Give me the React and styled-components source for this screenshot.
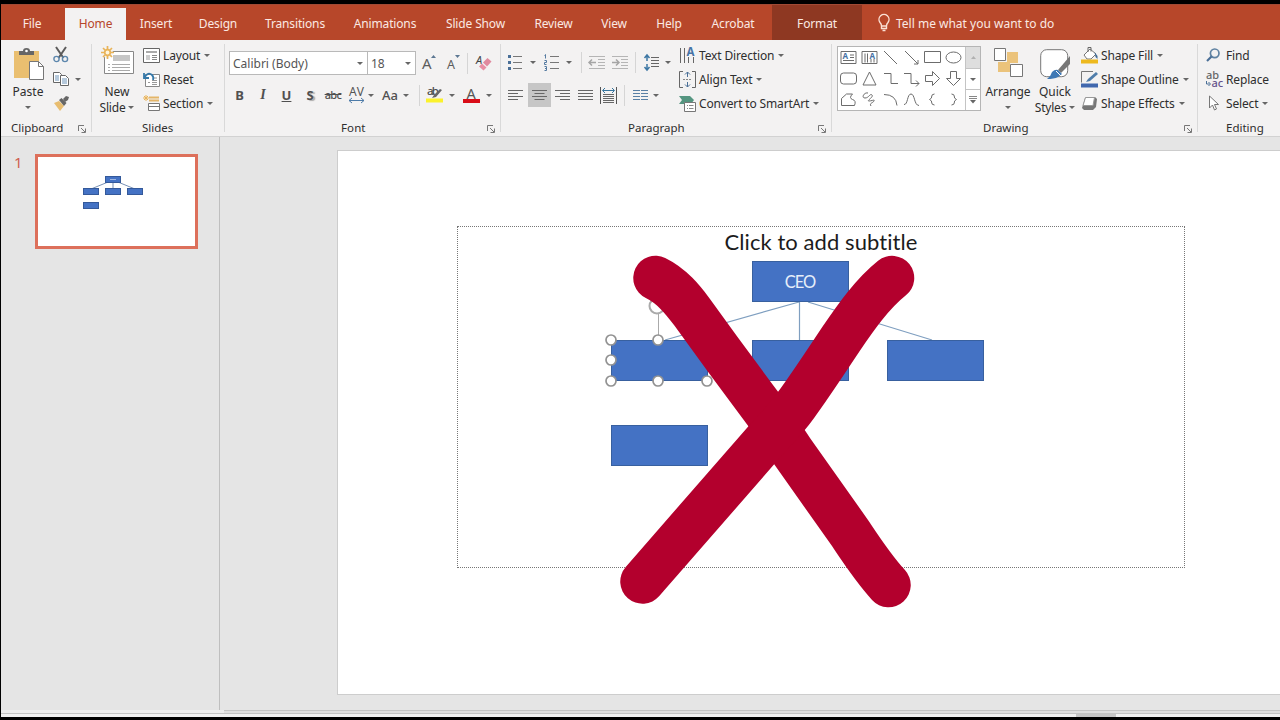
import React from 'react';
import styled, { createGlobalStyle } from 'styled-components';

const Global = createGlobalStyle`
  *, *::before, *::after { box-sizing: border-box; }
  body { margin: 0; background: #000; overflow: hidden; }
  svg { display: block; flex: none; overflow: visible; }
`;

const Window = styled.div`
  width: 1280px;
  height: 720px;
  padding: 4px 0 3px 1px;
  background: #000;
  display: flex;
  flex-direction: column;
  font: 12px 'Noto Sans', 'Open Sans', sans-serif;
  color: #2e2e2e;
  overflow: hidden;
`;

/* ---------- Tab strip ---------- */
const TabStrip = styled.nav`
  height: 36px;
  flex: none;
  display: flex;
  align-items: flex-end;
  background: #b7472a;
  border-top: 1px solid #a04a35;
`;
const Tab = styled.div`
  width: ${(p) => p.$w}px;
  height: ${(p) => (p.$context ? 35 : 32)}px;
  padding: ${(p) => (p.$context ? 3 : 0)}px 0 2px;
  margin-left: ${(p) => p.$ml || 0}px;
  display: flex;
  align-items: center;
  justify-content: center;
  white-space: nowrap;
  letter-spacing: -0.15px;
  color: ${(p) => (p.$active ? '#b7472a' : '#fbe9e3')};
  background: ${(p) => (p.$active ? '#f3f2f2' : p.$context ? '#8e3822' : 'transparent')};
`;
const TellMe = styled.div`
  height: 32px;
  padding-bottom: 2px;
  margin-left: 16px;
  display: flex;
  align-items: center;
  gap: 6px;
  color: #fbe9e3;
  letter-spacing: 0;
  white-space: nowrap;
`;

/* ---------- Ribbon ---------- */
const Ribbon = styled.div`
  height: 97px;
  flex: none;
  display: flex;
  background: #f3f2f2;
  border-bottom: 1px solid #d2d2d2;
`;
const Group = styled.section`
  width: ${(p) => p.$w}px;
  flex: none;
  display: flex;
  flex-direction: column;
  padding-top: 3px;
  background: linear-gradient(#d9d9d9, #d9d9d9) right 4px / 1px 88px no-repeat;
`;
const GroupBody = styled.div`
  height: 77px;
  display: flex;
`;
const Caption = styled.div`
  height: 16px;
  position: relative;
  padding-left: ${(p) => p.$pl}px;
  line-height: 16px;
  font-size: 11.5px;
  white-space: nowrap;
  letter-spacing: ${(p) => p.$ls || 0}px;
`;
const Launcher = styled.span`
  position: absolute;
  right: 6px;
  top: 5px;
`;
const Column = styled.div`
  width: ${(p) => p.$w}px;
  margin-left: ${(p) => p.$ml || 0}px;
  flex: none;
  display: flex;
  flex-direction: column;
`;
const Command = styled.div`
  height: 24px;
  display: flex;
  align-items: center;
  white-space: nowrap;
  letter-spacing: -0.15px;
`;
const IconCell = styled.span`
  width: ${(p) => p.$w || 20}px;
  flex: none;
`;
const BigButton = styled.div`
  width: ${(p) => p.$w}px;
  margin-left: ${(p) => p.$ml || 0}px;
  flex: none;
  display: flex;
  flex-direction: column;
  align-items: center;
`;
const BigIcon = styled.span`
  height: 40px;
  padding-top: ${(p) => p.$pt || 3}px;
`;
const BigLabel = styled.span`
  height: 16px;
  display: flex;
  align-items: center;
  white-space: nowrap;
  letter-spacing: ${(p) => p.$ls || 0}px;
`;
const Arrow = styled.i`
  flex: none;
  margin-left: ${(p) => p.$ml ?? 3}px;
  border: 3px solid transparent;
  border-top-color: #666;
  border-bottom: 0;
`;
const ToolRow = styled.div`
  height: 24px;
  margin-top: ${(p) => p.$mt || 0}px;
  padding-left: ${(p) => p.$pl || 0}px;
  display: flex;
  align-items: center;
`;
const Slot = styled.span`
  width: ${(p) => p.$w}px;
  height: 24px;
  margin-left: ${(p) => p.$ml || 0}px;
  flex: none;
  display: flex;
  align-items: center;
  justify-content: center;
  background: ${(p) => (p.$on ? '#c6c6c6' : 'transparent')};
`;
const Divider = styled.i`
  width: 1px;
  height: 21px;
  flex: none;
  margin: 0 ${(p) => p.$r || 0}px 0 ${(p) => p.$l || 0}px;
  background: #d5d5d5;
`;
const Combo = styled.div`
  width: ${(p) => p.$w}px;
  height: 24px;
  margin-left: ${(p) => p.$ml || 0}px;
  padding: 0 4px 0 3px;
  display: flex;
  align-items: center;
  justify-content: space-between;
  border: 1px solid #b9b9b9;
  background: #fff;
  color: #555;
`;
const Glyph = styled.span`
  font-size: ${(p) => p.$size || 13}px;
  line-height: 16px;
  color: #505050;
  font-weight: ${(p) => (p.$bold ? 700 : 500)};
  font-style: ${(p) => (p.$italic ? 'italic' : 'normal')};
  font-family: ${(p) => (p.$serif ? "'Liberation Serif', serif" : 'inherit')};
  text-decoration: ${(p) => p.$line || 'none'};
  text-shadow: ${(p) => (p.$shadow ? '2px 1px 1px #aaa' : 'none')};
  letter-spacing: ${(p) => p.$ls || 0}px;
`;

/* ---------- Shape gallery ---------- */
const Gallery = styled.div`
  width: 144px;
  height: 65px;
  margin: 3px 0 0 5px;
  flex: none;
  display: flex;
  border: 1px solid #b5b5b5;
  background: #fff;
`;
const ShapeGrid = styled.div`
  width: 127px;
  display: grid;
  grid-template-columns: repeat(6, 21px);
  grid-template-rows: repeat(3, 21px);
  place-items: center;
`;
const GalleryScroll = styled.div`
  flex: 1;
  display: grid;
  grid-template-rows: 21px 21px 21px;
  border-left: 1px solid #c4c4c4;
`;
const ScrollKey = styled.span`
  display: grid;
  place-items: center;
  background: ${(p) => (p.$off ? '#dedede' : '#fff')};
  & + & { border-top: 1px solid #c4c4c4; }
`;

/* ---------- Workspace ---------- */
const Workspace = styled.main`
  flex: 1;
  min-height: 0;
  display: flex;
  background: #e5e5e5;
`;
const ThumbPane = styled.aside`
  width: 219px;
  flex: none;
  padding: 17px 0 0 13px;
  display: flex;
  align-items: flex-start;
  border-right: 1px solid #bfbfbf;
`;
const ThumbNumber = styled.span`
  width: 21px;
  font-size: 15px;
  line-height: 16px;
  color: #cf5f4e;
`;
const Thumb = styled.div`
  width: 163px;
  height: 95px;
  border: 3px solid #dd705b;
  background: #fff;
`;
const Stage = styled.div`
  flex: 1;
  padding: 13px 0 0 117px;
  overflow: hidden;
`;
const Slide = styled.div`
  position: relative;
  width: 960px;
  height: 545px;
  border: 1px solid #cdcdcd;
  background: #fff;
`;
const Subtitle = styled.div`
  position: absolute;
  left: 119px;
  top: 75px;
  width: 728px;
  height: 342px;
  border: 1px dotted #777;
  text-align: center;
  font: 22px/30px Lato, sans-serif;
  letter-spacing: 0.07px;
  color: #1c1c1c;
`;
const Node = styled.div`
  position: absolute;
  left: ${(p) => p.$x}px;
  top: ${(p) => p.$y}px;
  width: 97px;
  height: 41px;
  border: 1px solid #38609f;
  background: #4472c4;
  color: #e6eefa;
  font: 16.5px/40px Lato, sans-serif;
  letter-spacing: -1px;
  text-align: center;
`;
const Overlay = styled.svg`
  position: absolute;
  left: 0;
  top: 0;
`;
const StatusBar = styled.footer`
  height: 7px;
  flex: none;
  background: #ededed;
`;
const SplitLine = styled.div`
  height: 3px;
  margin-left: 223px;
  border-top: 1px solid #c4c4c4;
  background: #dfdfdf;
`;
const StatusEdge = styled.div`
  height: 4px;
  padding-left: 1075px;
  border-top: 1px solid #c4c4c4;
  background: #f1f1f1;
`;
const StatusThumb = styled.div`
  width: 40px;
  height: 3px;
  background: #c6c6c6;
`;

const Ico = ({ w = 16, h = w, children, ...rest }) => (
  <svg width={w} height={h} viewBox={`0 0 ${w} ${h}`} fill="none" stroke="#666" {...rest}>{children}</svg>
);

const LaunchMark = () => (
  <Launcher><Ico w={8} stroke="#777"><path d="M.5 6V.5H6M3 3l4 4M7.500 3.500v4h-4" /></Ico></Launcher>
);

/* Clipboard and slide icons */
const PasteIcon = () => (
  <Ico w={31} h={33}>
    <path d="M1 3h25v27H1z" fill="#eabf70" stroke="none" />
    <path d="M6 7V3h4q0-3 3.500-3T17 3h4v4z" fill="#666" stroke="none" />
    <circle cx="13.500" cy="3" r="1.300" fill="#fff" stroke="none" />
    <path d="M16.500 13.500h9l5 5v13h-14z" fill="#fff" stroke="#777" />
    <path d="M25.500 13.500v5h5" stroke="#777" />
  </Ico>
);
const CutIcon = () => (
  <Ico w={16}>
    <path d="M3 0l7.500 11M13 0L5.500 11" stroke="#5c5c5c" strokeWidth="2" />
    <circle cx="3.500" cy="12" r="2.600" stroke="#5d87ad" strokeWidth="1.400" />
    <circle cx="12" cy="12" r="2.600" stroke="#5d87ad" strokeWidth="1.400" />
  </Ico>
);
const CopyIcon = () => (
  <Ico w={17} h={16}>
    <path d="M.5 1.500h6l2 2v8h-8z" fill="#fff" />
    <path d="M2 5h4M2 7h4M2 9h4" stroke="#6d93b8" />
    <path d="M7.500 4.500h5l3 3v7H7.500z" fill="#fff" />
    <path d="M9 8h5M9 10h5M9 12h5" stroke="#6d93b8" />
  </Ico>
);
const BrushIcon = () => (
  <Ico w={17} h={15} stroke="none">
    <path d="M1 7l5-2 5 5-4 5z" fill="#e8bd70" />
    <path d="M6 4l2.500-2 5 5L11 10z" fill="#666" />
    <path d="M10 3l3-3 3 1-1 3-3 2z" fill="#666" />
  </Ico>
);
const NewSlideIcon = () => (
  <Ico w={33} h={30}>
    <path d="M3.500 5.500h29v22h-29z" fill="#fff" stroke="#888" />
    <path d="M12 9h17v6H12z" fill="#c6c6c6" stroke="none" />
    <path d="M7 18.500h2M11 18.500h18M7 21.500h2M11 21.500h18M7 24.500h2M11 24.500h18" stroke="#aaa" />
    <circle cx="6.500" cy="6.500" r="5.500" fill="#f3f2f2" stroke="none" />
    <circle cx="6.500" cy="6.500" r="2.800" fill="#fff5dc" stroke="#e9b45a" strokeWidth="1.700" />
    <path d="M6.500 0v3M6.500 10v3M0 6.500h3M10 6.500h3M2 2l2 2M9 9l2 2M11 2L9 4M4 9l-2 2" stroke="#e9b45a" strokeWidth="1.700" />
  </Ico>
);
const LayoutIcon = () => (
  <Ico w={17} h={15}><path d="M.5.5h16v14H.5z" fill="#fff" /><path d="M3 4h11" stroke="#aaa" strokeWidth="2" /><path d="M3 7h4v5H3z" fill="#ccc" stroke="none" /><path d="M9 7.500h5M9 9.500h5M9 11.500h5" stroke="#888" /></Ico>
);
const ResetIcon = () => (
  <Ico w={17} h={15}><path d="M2.500 2.500h14v12h-14z" fill="#fff" stroke="#888" /><path d="M10 6h4M5 10.500h2M9 8.500h5M9 10.500h5M9 12.500h5" stroke="#999" /><path d="M1 1v5h5M1.500 5.500Q5-.5 9 3q2 2 1 5" stroke="#3578a8" strokeWidth="1.800" /></Ico>
);
const SectionIcon = () => (
  <Ico w={17} h={16}><path d="M6 2.500h10M6 5.500h10" stroke="#e4b568" strokeWidth="2" /><path d="M5.500 8.500h11v7h-11zM5.500 11.500h11" fill="#fff" stroke="#777" /><path d="M3 0v6M0 3h6M1 1l4 4M5 1L1 5" stroke="#e9b45a" /></Ico>
);

/* Font icons */
const GrowIcon = () => (
  <Ico w={15} h={18}><text x="0" y="15" fontSize="15" fill="#5c5c5c" stroke="none">A</text><path d="M9 4l2.500-3L14 4z" fill="#5c7792" stroke="none" /></Ico>
);
const ShrinkIcon = () => (
  <Ico w={15} h={18}><text x="1" y="15" fontSize="12.500" fill="#5c5c5c" stroke="none">A</text><path d="M9 1l2.500 3L14 1z" fill="#5c7792" stroke="none" /></Ico>
);
const EraserIcon = () => (
  <Ico w={16} h={18}><text x="0" y="10" fontSize="11" fontStyle="italic" fill="#444" stroke="none">A</text><path d="M3 12.500l3-3 4.500 4-3 3z" fill="#e88fa4" stroke="none" /><path d="M7 8.500l4.500-4.500 4 3.500-4.500 5z" fill="#e08a9f" stroke="none" /></Ico>
);
const SpacingIcon = () => (
  <Ico w={17} h={17}><text x="1" y="9" fontSize="12" textLength="15" fill="#555" stroke="none">AV</text><path d="M1 13.500h15M4 11l-3 2.500L4 16M13 11l3 2.500-3 2.500" stroke="#4d7ba8" /></Ico>
);
const HighlightIcon = () => (
  <Ico w={18} h={18}><text x="1" y="9" fontSize="11.500" textLength="12" fontWeight="500" fill="#4c4c4c" stroke="none">ab</text><path d="M6 12l2-3 6-6 2 1-6 7z" fill="#666" stroke="none" /><path d="M0 12.500h17v4H0z" fill="#fbf22c" stroke="none" /></Ico>
);
const FontColorIcon = () => (
  <Ico w={17} h={18}><text x="3.500" y="12.500" fontSize="14.500" fill="#555" stroke="none">A</text><path d="M0 13h17v4H0z" fill="#d90d18" stroke="none" /></Ico>
);

/* Paragraph icons */
const BulletsIcon = () => (
  <Ico w={15} h={17}><path d="M5 2.500h9M5 8.500h9M5 14.500h9" stroke="#777" /><path d="M0 1h3v3H0zM0 7h3v3H0zM0 13h3v3H0z" fill="#4a6f97" stroke="none" /></Ico>
);
const NumbersIcon = () => (
  <Ico w={16} h={17}><path d="M6 2.500h9M6 8.500h9M6 14.500h9" stroke="#777" /><path d="M.5 1.500l1-1v4M.5 6.500h2v2h-2v2h2M.5 12.500h2v4h-2M1 14.500h1" stroke="#557ba1" /></Ico>
);
const IndentIcon = ({ flip }) => (
  <Ico w={18} h={15} stroke="#b5b5b5"><path d="M1 1.500h16M10 4.500h7M10 7.500h7M10 10.500h7M1 13.500h16" /><path d={flip ? 'M1 7.500h7M5 4.500l3 3-3 3' : 'M8 7.500H1M4 4.500l-3 3 3 3'} stroke="#a5a5a5" strokeWidth="1.500" /></Ico>
);
const LineSpaceIcon = () => (
  <Ico w={16} h={17}><path d="M7 3.500h8M7 6.500h8M7 9.500h8M7 12.500h8" stroke="#666" /><path d="M3 1v6M.5 4L3 1l2.500 3M3 10v6M.5 13L3 16l2.500-3" stroke="#3d77a4" strokeWidth="1.500" /></Ico>
);
const alignPaths = {
  left: 'M0 1.500h15M0 4.500h10M0 7.500h15M0 10.500h10',
  center: 'M0 1.500h15M2.500 4.500h10M0 7.500h15M2.500 10.500h10',
  right: 'M0 1.500h15M5 4.500h10M0 7.500h15M5 10.500h10',
  full: 'M0 1.500h15M0 4.500h15M0 7.500h15M0 10.500h15',
};
const AlignIcon = ({ kind }) => <Ico w={15} h={12}><path d={alignPaths[kind]} /></Ico>;
const DistributeIcon = () => (
  <Ico w={17} h={17}><path d="M.5 0v17M16.500 0v17" stroke="#555" /><path d="M3 7.500h11M3 9.500h11M3 11.500h11M3 13.500h11M3 15.500h11" /><path d="M3 3.500h11M5 1L2.500 3.500 5 6M12 1l2.500 2.500L12 6" stroke="#36759e" /></Ico>
);
const ColumnsIcon = () => <Ico w={15} h={12} stroke="#5980a5"><path d="M0 1.500h7M8 1.500h7M0 4.500h7M8 4.500h7M0 7.500h7M8 7.500h7M0 10.500h7M8 10.500h7" /></Ico>;
const DirectionIcon = () => (
  <Ico w={16} h={17}><path d="M1.500 1v15M5.500 1v15M9.500 10v6M14.500 10v6" stroke="#666" /><text x="7.500" y="9" fontSize="11.500" fontWeight="700" fill="#4672a5" stroke="none">A</text></Ico>
);
const AlignTextIcon = () => (
  <Ico w={17} h={17}><path d="M4 .5H.5v16H4M13 .5h3.500v16H13" /><path d="M4 8.500h9" stroke="#888" strokeDasharray="2 1" /><path d="M8.500 1v5M6 3.500L8.500 1 11 3.500M8.500 11v5M6 13.500L8.500 16l2.500-2.500" stroke="#4a6f97" /></Ico>
);
const SmartArtIcon = () => (
  <Ico w={17} h={17}><path d="M0 1h11l4 4-3 4H0l3-4z" fill="#559580" stroke="none" /><path d="M5.500 7.500h11v9h-11z" fill="#fff" stroke="#777" /><path d="M8 10.500h1M10 10.500h4.500M8 13.500h1M10 13.500h4.500" stroke="#888" /></Ico>
);

/* Shape gallery glyphs */
const shapeGlyphs = [
  <><path d="M1 2.500h15v12H1zM10 6h4M10 8.500h4M3 11.500h11" /><text x="2.500" y="10" fontSize="8" fontWeight="700" fill="#4672a5" stroke="none">A</text></>,
  <><path d="M1 2.500h15v12H1zM4 4.500v9M6.500 4.500v9M10 10v3.500M13 10v3.500" /><text x="8.500" y="10" fontSize="8" fontWeight="700" fill="#4672a5" stroke="none">A</text></>,
  <path d="M2 2l13 13" />,
  <><path d="M2 2l13 13" /><path d="M15 11v4h-4" /></>,
  <path d="M.5 2.500h16v11H.5z" />,
  <ellipse cx="8.500" cy="8.500" rx="7.500" ry="5.500" />,
  <rect x=".5" y="3" width="16" height="11" rx="3" />,
  <path d="M8.500 2l6.500 13H2z" />,
  <path d="M2 3.500h7v10h7" />,
  <><path d="M1 3.500h7v10h8" /><path d="M13 10.500l3 3-3 3" /></>,
  <path d="M1.500 5.500h7v-4l7 7-7 7v-4h-7z" />,
  <path d="M5.500 1.500h6v7h4l-7 7-7-7h4z" />,
  <path d="M1.500 14.500v-7l5-4.500h6q-4 4 0 5.500 4 1 2 6z" />,
  <path d="M7 2C3 1 0 7 4 7s5-5 7-3-6 6-3 6 6-2 5 0-5 2-3 5" />,
  <path d="M2 3.500q12 0 13 11" />,
  <path d="M1 13.500C5 14 4 3 8 3s3 11.500 8 11.500" />,
  <path d="M10.500 3q-3 0-3 3v1l-2 1.500 2 1.500v1q0 3 3 3" />,
  <path d="M6.500 3q3 0 3 3v1l2 1.500-2 1.500v1q0 3-3 3" />,
];

/* Drawing and editing icons */
const ArrangeIcon = () => (
  <Ico w={29} h={29}><path d="M13 4h11v11H13zM4 14h12v10H4z" fill="#ebc37b" stroke="none" /><path d="M.5.5h11v12H.5zM16.500 16.500h12v12h-12z" fill="#fff" stroke="#777" /></Ico>
);
const QuickIcon = () => (
  <Ico w={31} h={32}><rect x=".7" y=".7" width="27" height="27" rx="6" fill="#fff" stroke="#777" /><path d="M30 7v8l-9 9-3-3z" fill="#777" stroke="none" /><path d="M18 21l4 4-4 3q-4 2-11 2 4-3 5-7 3-3 6-2z" fill="#3e78b5" stroke="none" /><path d="M16 22l5 5" stroke="#fff" /></Ico>
);
const FillIcon = () => (
  <Ico w={17} h={17}><path d="M3 8l6-6 6 5-5 5H6z" fill="#fff" stroke="#777" /><path d="M7 5V.5h3v4" /><path d="M13.500 5l3 4v3l-2-2z" fill="#416b94" stroke="none" /><path d="M0 12.500h17v4H0z" fill="#edb91e" stroke="none" /></Ico>
);
const OutlineIcon = () => (
  <Ico w={17} h={17}><path d="M12 .5H.5v11" stroke="#777" /><path d="M15 1l2 2-8 7-4 1 2-3z" fill="#4f7daa" stroke="none" /><path d="M0 12.500h17v4H0z" fill="#4168ae" stroke="none" /></Ico>
);
const EffectsIcon = () => (
  <Ico w={16} h={15}><path d="M4 2l2-1h8l2 2-1 8-3 3H3l-2-2z" fill="#777" stroke="none" /><path d="M4.500 1.500h9l-1.500 8H2z" fill="#fff" stroke="#999" strokeLinejoin="round" /></Ico>
);
const FindIcon = () => <Ico w={14} h={15}><circle cx="8.700" cy="5.300" r="4.300" stroke="#5f82a2" strokeWidth="1.700" /><path d="M5.500 8.500L1 13" stroke="#4a6f97" strokeWidth="2.200" /></Ico>;
const ReplaceIcon = () => (
  <Ico w={17} h={17}>
    <text x="0" y="8" fontSize="11" fontWeight="500" fill="#666" stroke="none">ab<tspan x="5.500" y="16" fill="#66538c">ac</tspan></text>
    <path d="M.5 10v3h3M2.500 11l2 2-2 2" stroke="#4a6f97" />
  </Ico>
);
const SelectIcon = () => <Ico w={14} h={16}><path d="M3.500 1v12l3-3 2 5 2-1-2-4.500h4z" fill="#fff" stroke="#777" /></Ico>;
const BulbIcon = () => (
  <Ico w={12} h={18} stroke="#fbe0d4" strokeWidth="1.400"><path d="M3.500 12Q3.500 10 2 8.500a5 5 0 1 1 8 0Q8.500 10 8.500 12zM3.500 12v2.500h5V12M4.500 16.500h3" /></Ico>
);

const tabs = [
  { t: 'File', w: 62 },
  { t: 'Home', w: 61, ml: 2, active: true },
  { t: 'Insert', w: 60 },
  { t: 'Design', w: 64 },
  { t: 'Transitions', w: 90 },
  { t: 'Animations', w: 90 },
  { t: 'Slide Show', w: 91 },
  { t: 'Review', w: 65 },
  { t: 'View', w: 56 },
  { t: 'Help', w: 54 },
  { t: 'Acrobat', w: 74 },
  { t: 'Format', w: 90, ml: 2, context: true },
];

const Cmd = ({ icon, label, arrow, iw }) => (
  <Command><IconCell $w={iw}>{icon}</IconCell>{label}{arrow && <Arrow $ml={4} />}</Command>
);

const thumbNodes = [[67, 19], [45, 31], [67, 31], [89, 31], [45, 45]];
const handles = [[611, 340], [658, 340], [611, 360], [611, 381], [658, 381], [707, 381]];

export default function App() {
  return (
    <Window>
      <Global />
      <TabStrip>
        {tabs.map((t) => (
          <Tab key={t.t} $w={t.w} $ml={t.ml} $active={t.active} $context={t.context}>{t.t}</Tab>
        ))}
        <TellMe><BulbIcon />Tell me what you want to do</TellMe>
      </TabStrip>

      <Ribbon>
        <Group $w={91}>
          <GroupBody>
            <BigButton $w={38} $ml={8}>
              <BigIcon $pt={5}><PasteIcon /></BigIcon>
              <BigLabel>Paste</BigLabel>
              <BigLabel><Arrow $ml={0} /></BigLabel>
            </BigButton>
            <Column $w={36} $ml={6}>
              <Command><CutIcon /></Command>
              <Command><CopyIcon /><Arrow $ml={5} /></Command>
              <Command><BrushIcon /></Command>
            </Column>
          </GroupBody>
          <Caption $pl={10}>Clipboard<LaunchMark /></Caption>
        </Group>

        <Group $w={133}>
          <GroupBody>
            <BigButton $w={42} $ml={4}>
              <BigIcon><NewSlideIcon /></BigIcon>
              <BigLabel>New</BigLabel>
              <BigLabel $ls={-0.2}>Slide<Arrow /></BigLabel>
            </BigButton>
            <Column $w={80} $ml={5}>
              <Cmd icon={<LayoutIcon />} label="Layout" arrow />
              <Cmd icon={<ResetIcon />} label="Reset" />
              <Cmd icon={<SectionIcon />} label="Section" arrow />
            </Column>
          </GroupBody>
          <Caption $pl={50}>Slides</Caption>
        </Group>

        <Group $w={276}>
          <GroupBody>
            <Column $w={275}>
              <ToolRow $mt={8} $pl={4}>
                <Combo $w={139}>Calibri (Body)<Arrow /></Combo>
                <Combo $w={49} $ml={-1}>18<Arrow /></Combo>
                <Slot $w={27}><GrowIcon /></Slot>
                <Slot $w={20}><ShrinkIcon /></Slot>
                <Divider $l={4} $r={7} />
                <Slot $w={18}><EraserIcon /></Slot>
              </ToolRow>
              <ToolRow $mt={8} $pl={3}>
                <Slot $w={23}><Glyph $bold>B</Glyph></Slot>
                <Slot $w={24}><Glyph $italic $serif $bold $size={14}>I</Glyph></Slot>
                <Slot $w={23}><Glyph $bold $line="underline">U</Glyph></Slot>
                <Slot $w={24}><Glyph $bold $shadow>S</Glyph></Slot>
                <Slot $w={22}><Glyph $size={11} $line="line-through" $ls={-0.6}>abc</Glyph></Slot>
                <Slot $w={24}><SpacingIcon /></Slot>
                <Arrow $ml={0} />
                <Slot $w={18} $ml={7}><Glyph $ls={-0.1}>Aa</Glyph></Slot>
                <Arrow $ml={4} />
                <Divider $l={10} $r={6} />
                <Slot $w={18}><HighlightIcon /></Slot>
                <Arrow $ml={5} />
                <Slot $w={32}><FontColorIcon /></Slot>
                <Arrow $ml={-1} />
              </ToolRow>
            </Column>
          </GroupBody>
          <Caption $pl={116} $ls={0.1}>Font<LaunchMark /></Caption>
        </Group>

        <Group $w={331}>
          <GroupBody>
            <Column $w={173}>
              <ToolRow $mt={7} $pl={7}>
                <Slot $w={15}><BulletsIcon /></Slot><Arrow $ml={7} />
                <Slot $w={31}><NumbersIcon /></Slot><Arrow $ml={-1} />
                <Divider $l={9} $r={6} />
                <Slot $w={18}><IndentIcon /></Slot>
                <Slot $w={28}><IndentIcon flip /></Slot>
                <Divider $l={1} $r={8} />
                <Slot $w={16}><LineSpaceIcon /></Slot><Arrow $ml={5} />
              </ToolRow>
              <ToolRow $mt={9} $pl={2}>
                <Slot $w={25}><AlignIcon kind="left" /></Slot>
                <Slot $w={23} $on><AlignIcon kind="center" /></Slot>
                <Slot $w={23}><AlignIcon kind="right" /></Slot>
                <Slot $w={23}><AlignIcon kind="full" /></Slot>
                <Slot $w={23}><DistributeIcon /></Slot>
                <Divider $l={4} $r={8} />
                <Slot $w={15}><ColumnsIcon /></Slot><Arrow $ml={5} />
              </ToolRow>
            </Column>
            <Column $w={145} $ml={5}>
              <Cmd icon={<DirectionIcon />} label="Text Direction" arrow />
              <Cmd icon={<AlignTextIcon />} label="Align Text" arrow />
              <Cmd icon={<SmartArtIcon />} label="Convert to SmartArt" arrow />
            </Column>
          </GroupBody>
          <Caption $pl={127}>Paragraph<LaunchMark /></Caption>
        </Group>

        <Group $w={366}>
          <GroupBody>
            <Gallery>
              <ShapeGrid>
                {shapeGlyphs.map((g, i) => <Ico key={i} w={17} stroke="#6c6c6c">{g}</Ico>)}
              </ShapeGrid>
              <GalleryScroll>
                <ScrollKey $off><Ico w={5} h={3} stroke="none"><path d="M0 3l2.500-3L5 3z" fill="#b0b0b0" /></Ico></ScrollKey>
                <ScrollKey><Arrow $ml={0} /></ScrollKey>
                <ScrollKey><Ico w={8} h={8}><path d="M0 .5h8M0 2.500h8" stroke="#888" /><path d="M1 4h6L4 7.500z" fill="#666" stroke="none" /></Ico></ScrollKey>
              </GalleryScroll>
            </Gallery>
            <BigButton $w={48} $ml={3}>
              <BigIcon $pt={5}><ArrangeIcon /></BigIcon>
              <BigLabel $ls={-0.1}>Arrange</BigLabel>
              <BigLabel><Arrow $ml={0} /></BigLabel>
            </BigButton>
            <BigButton $w={46}>
              <BigIcon $pt={6}><QuickIcon /></BigIcon>
              <BigLabel>Quick</BigLabel>
              <BigLabel $ls={-0.2}>Styles<Arrow /></BigLabel>
            </BigButton>
            <Column $w={112} $ml={3}>
              <Cmd icon={<FillIcon />} label="Shape Fill" arrow />
              <Cmd icon={<OutlineIcon />} label="Shape Outline" arrow />
              <Cmd icon={<EffectsIcon />} label="Shape Effects" arrow />
            </Column>
          </GroupBody>
          <Caption $pl={151}>Drawing<LaunchMark /></Caption>
        </Group>

        <Group $w={90}>
          <GroupBody>
            <Column $w={80} $ml={8}>
              <Cmd icon={<FindIcon />} label="Find" />
              <Cmd icon={<ReplaceIcon />} label="Replace" />
              <Cmd icon={<SelectIcon />} label="Select" arrow />
            </Column>
          </GroupBody>
          <Caption $pl={28}>Editing</Caption>
        </Group>
      </Ribbon>

      <Workspace>
        <ThumbPane>
          <ThumbNumber>1</ThumbNumber>
          <Thumb>
            <svg width="157" height="89" viewBox="0 0 157 89">
              <path d="M75 23L53 32M75 23v9M75 23l22 9" stroke="#7790b5" />
              {thumbNodes.map(([x, y]) => (
                <rect key={`${x}-${y}`} x={x + 0.5} y={y + 0.5} width="15" height="6" fill="#4472c4" stroke="#34599a" />
              ))}
              <path d="M72 22.500h6" stroke="#9db5e0" />
            </svg>
          </Thumb>
        </ThumbPane>
        <Stage>
          <Slide>
            <Subtitle>Click to add subtitle</Subtitle>
            <Overlay width="942" height="543" viewBox="338 151 942 543" fill="none">
              <path d="M799 302L665 340M799.500 302v38M808 302l124 38" stroke="#7f9fc0" strokeWidth="1.200" />
            </Overlay>
            <Node $x={413.5} $y={110}>CEO</Node>
            <Node $x={273} $y={189} />
            <Node $x={413.5} $y={189} />
            <Node $x={549} $y={189} />
            <Node $x={273} $y={274} />
            <Overlay width="942" height="543" viewBox="338 151 942 543" fill="none">
              <path d="M658.500 312v24" stroke="#aaa" />
              <circle cx="657" cy="306" r="7.500" fill="#fff" stroke="#aaa" strokeWidth="2" />
              {handles.map(([x, y]) => (
                <circle key={`${x}-${y}`} cx={x} cy={y} r="5" fill="#fff" stroke="#929292" strokeWidth="1.700" />
              ))}
              <g stroke="#b3002d" strokeWidth="44.500" strokeLinecap="round" strokeLinejoin="round">
                <path d="M655.500 278C672 286 683 300 692 312C715 344 737 374 761 406C771 419 782 436 792 451L850 533C862 551 873 568 888.500 585" />
                <path d="M892 278C872 294 856 317 841 339C825 363 810 386 796 405C786 419 776 429 765 441L642.500 581.500" />
              </g>
            </Overlay>
          </Slide>
        </Stage>
      </Workspace>
      <StatusBar>
        <SplitLine />
        <StatusEdge><StatusThumb /></StatusEdge>
      </StatusBar>
    </Window>
  );
}
